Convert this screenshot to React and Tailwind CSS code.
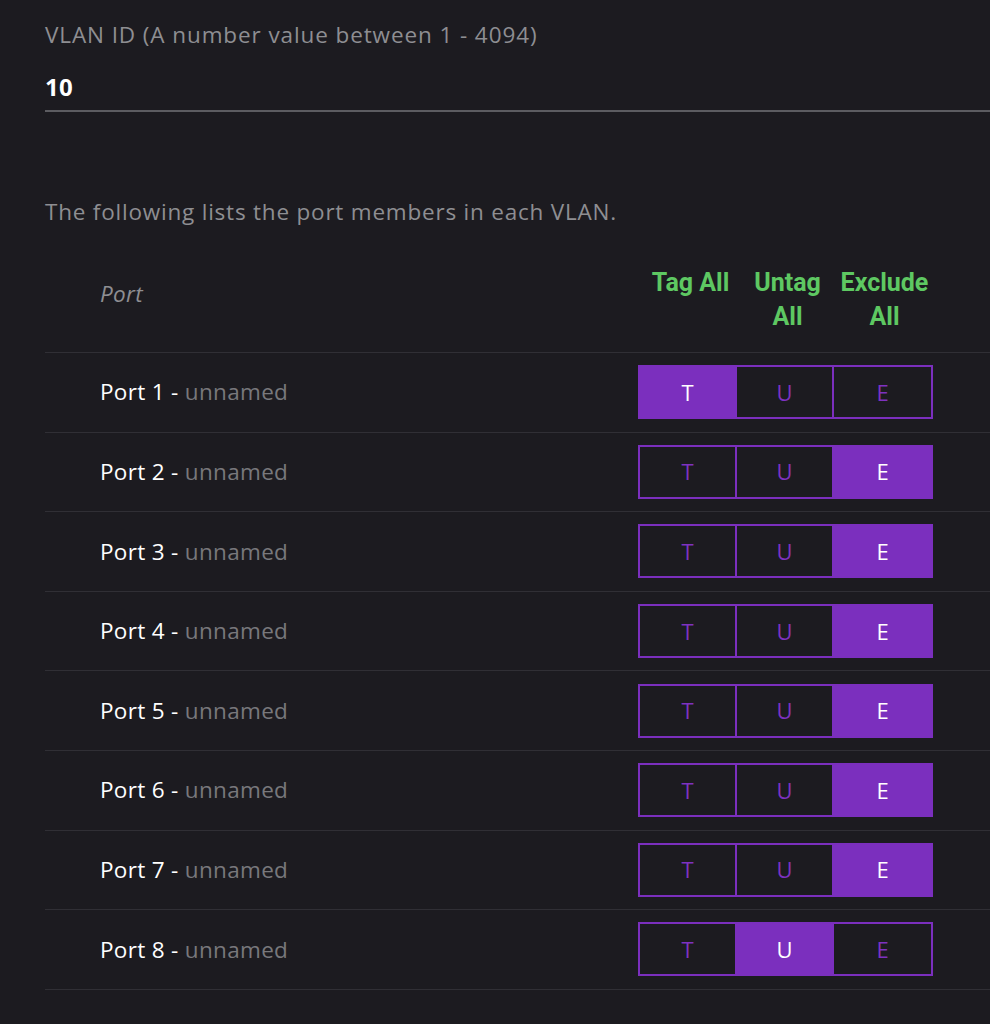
import React from "react";

const ports = [
  { name: "Port 1", mode: "T" },
  { name: "Port 2", mode: "E" },
  { name: "Port 3", mode: "E" },
  { name: "Port 4", mode: "E" },
  { name: "Port 5", mode: "E" },
  { name: "Port 6", mode: "E" },
  { name: "Port 7", mode: "E" },
  { name: "Port 8", mode: "U" },
];

const Segment = ({ label, active, last }) => (
  <div
    className={
      "flex items-center justify-center w-[97px] h-full text-[22px] " +
      (last ? "" : "border-r-2 border-[#7b2fbe] ") +
      (active ? "bg-[#7b2fbe] text-white" : "text-[#7e32c0]")
    }
  >
    {label}
  </div>
);

const App = () => {
  return (
    <div className="min-h-[1024px] bg-[#1c1b20] pl-[45px] pt-[20px] font-['Open_Sans',sans-serif] tracking-[0.02em] overflow-hidden">
      <p className="text-[22.5px] text-[#8e8e92] leading-[30px] tracking-[0.04em]">
        VLAN ID (A number value between 1 - 4094)
      </p>
      <div className="mt-[23px] border-b-2 border-[#5c5c61] w-[1000px] pb-[9px]">
        <p className="text-[24px] font-bold text-white leading-[28px]">10</p>
      </div>

      <p className="mt-[85px] text-[22.5px] text-[#8e8e92] leading-[30px] tracking-[0.035em]">
        The following lists the port members in each VLAN.
      </p>

      <div className="w-[1000px]">
        <div className="flex items-start h-[126px] border-b border-[#302f35]">
          <p className="pl-[55px] flex-1 pt-[52px] italic text-[22.5px] leading-[30px] text-[#8e8e92]">
            Port
          </p>
          <div className="flex mr-[112px] pt-[39px] text-[25px] font-bold text-[#5ec862] leading-[34px] text-center tracking-normal font-['Roboto',sans-serif]">
            <span className="w-[97px]">Tag All</span>
            <span className="w-[97px]">Untag<br />All</span>
            <span className="w-[97px]">Exclude<br />All</span>
          </div>
        </div>

        {ports.map((p) => (
          <div
            key={p.name}
            className="flex items-center h-[79.6px] border-b border-[#302f35]"
          >
            <p className="pl-[55px] flex-1 text-[22.5px] text-white">
              {p.name} - <span className="text-[#78787c]">unnamed</span>
            </p>
            <div className="flex h-[54px] border-2 border-[#7b2fbe] mr-[112px] tracking-normal">
              <Segment label="T" active={p.mode === "T"} />
              <Segment label="U" active={p.mode === "U"} />
              <Segment label="E" active={p.mode === "E"} last />
            </div>
          </div>
        ))}
      </div>
    </div>
  );
};

export default App;
